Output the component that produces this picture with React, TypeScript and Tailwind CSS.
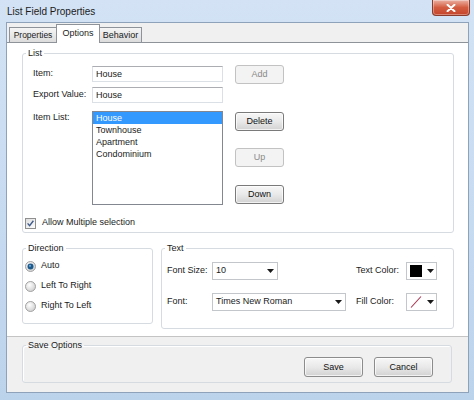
import React from 'react'

// groupbox with legend sitting on the border
function Fieldset({ legend, className = '', children }: { legend: string; className?: string; children: React.ReactNode }) {
  return (
    <fieldset className={`rounded-[3px] border border-[#d5dbe0] shadow-[inset_1px_1px_0_0_#ffffff] ${className}`}>
      <legend className="ml-[3px] px-[2px] leading-[12px]">{legend}</legend>
      {children}
    </fieldset>
  )
}

function Button({ label, disabled = false, className = '' }: { label: string; disabled?: boolean; className?: string }) {
  return (
    <button
      className={`flex items-center justify-center rounded-[3px] border leading-none ${
        disabled
          ? 'border-[#c2c2c2] bg-[#f3f3f3] text-[#8a8a8a]'
          : 'border-[#7a7a7a] bg-linear-to-b from-[#f7f7f7] via-[#e9e9e9] to-[#d2d2d2] text-[#111111] shadow-[inset_0_0_0_1px_rgba(255,255,255,0.7)]'
      } ${className}`}
    >
      {label}
    </button>
  )
}

function TextInput({ value }: { value: string }) {
  return (
    <input
      readOnly
      value={value}
      className="h-[16px] w-[131px] border border-[#dbdfe6] border-t-[#abadb3] bg-white pl-[3px] text-[9px] outline-none"
    />
  )
}

function Arrow() {
  return (
    <svg width="7" height="4" viewBox="0 0 7 4" className="shrink-0">
      <path d="M0 0H7L3.5 4Z" fill="#1a1a1a" />
    </svg>
  )
}

function Select({ value, className }: { value: string; className: string }) {
  return (
    <div className={`flex h-[18px] items-center justify-between border border-[#c3c6cb] bg-white pl-[3px] pr-[3px] ${className}`}>
      <span>{value}</span>
      <Arrow />
    </div>
  )
}

function ColorBox({ children }: { children: React.ReactNode }) {
  return (
    <div className="flex h-[18px] w-[31px] items-center gap-[5px] border border-[#c3c6cb] bg-white pl-[3px]">
      {children}
      <Arrow />
    </div>
  )
}

function Radio({ id, label, checked = false }: { id: string; label: string; checked?: boolean }) {
  return (
    <div className="flex h-[20px] items-center gap-[5px]">
      <svg width="11" height="11" viewBox="0 0 11 11">
        <defs>
          <radialGradient id={id} cx="0.4" cy="0.35" r="0.7">
            <stop offset="0" stopColor="#ffffff" />
            <stop offset="1" stopColor="#cdcdcd" />
          </radialGradient>
        </defs>
        <circle cx="5.5" cy="5.5" r="5" fill={`url(#${id})`} stroke="#9a9a9a" strokeWidth="0.9" />
        {checked && (
          <>
            <circle cx="5.5" cy="5.5" r="3" fill="#1d5a8c" />
            <circle cx="5" cy="4.8" r="1.1" fill="#6fa6d6" />
          </>
        )}
      </svg>
      <span>{label}</span>
    </div>
  )
}

const items = ['House', 'Townhouse', 'Apartment', 'Condominium']

export default function App() {
  return (
    <div className="flex h-[400px] w-[474px] flex-col overflow-hidden bg-linear-to-b from-[#d3e3f5] to-[#bcd3ec] pb-[7px] pl-[6px] pr-[5px] font-['Liberation_Sans',Arial,sans-serif] text-[9px] text-[#1b1b1b]">
      {/* title bar */}
      <div className="flex h-[22px] shrink-0 items-start justify-between">
        <span className="ml-[1px] mt-[6px] text-[10px] leading-[12px]">List Field Properties</span>
        <div className="-mr-px flex h-[16px] w-[38px] items-center justify-center rounded-b-[4px] border border-t-0 border-[#8a3b2b] bg-linear-to-b from-[#eab0a2] via-[#d35c40] to-[#c4452b] shadow-[inset_0_0_0_1px_rgba(255,255,255,0.35)]">
          <svg width="10" height="8" viewBox="0 0 10 8">
            <path d="M1.5 0.8L8.5 7.2M8.5 0.8L1.5 7.2" stroke="#ffffff" strokeWidth="2" strokeLinecap="round" />
          </svg>
        </div>
      </div>

      {/* client */}
      <div className="flex flex-1 flex-col border border-[#8ea2ba] bg-[#f0f0f0]">
        {/* tabs */}
        <div className="flex h-[19px] shrink-0 items-end pl-[2px]">
          <div className="flex h-[15px] w-[48px] items-center justify-center border border-b-0 border-[#8e9299] bg-linear-to-b from-[#f5f5f5] to-[#dcdcdc] text-[8.5px] leading-none">
            Properties
          </div>
          <div className="relative z-10 -mx-px -mb-px flex h-[19px] w-[44px] items-center justify-center border border-b-0 border-[#8e9299] bg-white pb-[1px] leading-none">
            Options
          </div>
          <div className="flex h-[15px] w-[43px] items-center justify-center border border-b-0 border-[#8e9299] bg-linear-to-b from-[#f5f5f5] to-[#dcdcdc] leading-none">
            Behavior
          </div>
        </div>

        {/* options panel */}
        <div className="flex-1 border-b border-t border-b-[#c4c4c4] border-t-[#8e9299] bg-white pl-[15px] pr-[14px] pt-[4px]">
          <Fieldset legend="List">
            <div className="flex pl-[10px]">
              <div className="grid grid-cols-[59px_131px] items-center gap-y-[5px] pt-[7px]">
                <span>Item:</span>
                <TextInput value="House" />
                <span>Export Value:</span>
                <TextInput value="House" />
                <span className="mt-[3px] self-start leading-[12px]">Item List:</span>
                <div className="mt-[3px] h-[94px] border border-[#828790] bg-white">
                  {items.map((it, i) => (
                    <div key={it} className={`h-[12px] pl-[3px] leading-[12px] ${i === 0 ? 'bg-[#3399ff] text-white' : ''}`}>
                      {it}
                    </div>
                  ))}
                </div>
              </div>
              <div className="ml-[12px] flex flex-col pt-[6px]">
                <Button label="Add" disabled className="h-[19px] w-[49px]" />
                <Button label="Delete" className="mt-[28px] h-[19px] w-[49px]" />
                <Button label="Up" disabled className="mt-[17px] h-[19px] w-[49px]" />
                <Button label="Down" className="mt-[18px] h-[19px] w-[49px]" />
              </div>
            </div>
            <div className="mb-[3px] mt-[12px] flex h-[12px] items-center gap-[6px] pl-[2px]">
              <svg width="11" height="11" viewBox="0 0 11 11">
                <defs>
                  <linearGradient id="cb" x1="0" y1="0" x2="1" y2="1">
                    <stop offset="0" stopColor="#dcdcdc" />
                    <stop offset="1" stopColor="#ffffff" />
                  </linearGradient>
                </defs>
                <rect x="0.5" y="0.5" width="10" height="10" fill="url(#cb)" stroke="#8f8f8f" />
                <path d="M2.6 5.4L4.6 7.6L8.4 2.8" fill="none" stroke="#3f5a8a" strokeWidth="1.4" />
              </svg>
              <span>Allow Multiple selection</span>
            </div>
          </Fieldset>

          <div className="mt-[9px] flex items-start gap-[8px]">
            <Fieldset legend="Direction" className="w-[131px] shrink-0">
              <div className="flex flex-col pb-[7px] pl-[2px] pt-[2px]">
                <Radio id="rAuto" label="Auto" checked />
                <Radio id="rLtr" label="Left To Right" />
                <Radio id="rRtl" label="Right To Left" />
              </div>
            </Fieldset>
            <Fieldset legend="Text" className="flex-1">
              <div className="grid grid-cols-[45px_144px_50px_31px] items-center gap-y-[13px] pb-[17px] pl-[5px] pt-[8px]">
                <span>Font Size:</span>
                <Select value="10" className="w-[66px]" />
                <span>Text Color:</span>
                <ColorBox>
                  <div className="h-[12px] w-[12px] bg-black" />
                </ColorBox>
                <span>Font:</span>
                <Select value="Times New Roman" className="w-[134px]" />
                <span>Fill Color:</span>
                <ColorBox>
                  <svg width="12" height="12" viewBox="0 0 12 12">
                    <path d="M1 11.5L11 0.5" stroke="#a8344f" strokeWidth="1.1" />
                  </svg>
                </ColorBox>
              </div>
            </Fieldset>
          </div>
        </div>

        {/* save options */}
        <div className="h-[55px] shrink-0 pl-[15px] pr-[16px] pt-[2px]">
          <Fieldset legend="Save Options">
            <div className="flex justify-end gap-[11px] pb-[5px] pr-[18px] pt-[6px]">
              <Button label="Save" className="h-[20px] w-[59px] border-[#8c8c8c]" />
              <Button label="Cancel" className="h-[20px] w-[59px] border-[#8c8c8c]" />
            </div>
          </Fieldset>
        </div>
      </div>
    </div>
  )
}
